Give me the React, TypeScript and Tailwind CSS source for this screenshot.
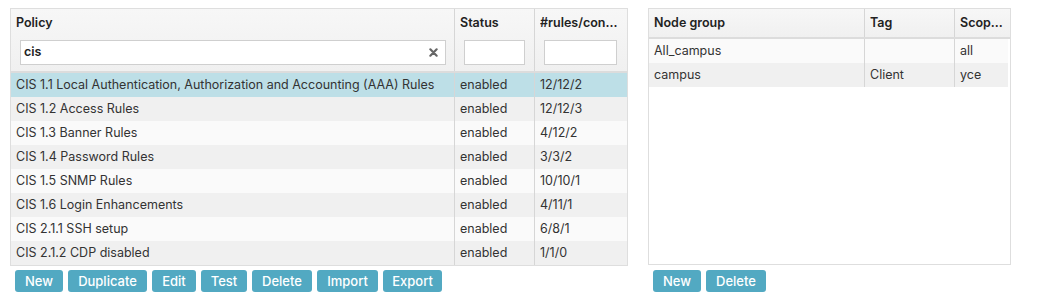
import React from 'react';

const policies = [
  { name: 'CIS 1.1 Local Authentication, Authorization and Accounting (AAA) Rules', status: 'enabled', rules: '12/12/2' },
  { name: 'CIS 1.2 Access Rules', status: 'enabled', rules: '12/12/3' },
  { name: 'CIS 1.3 Banner Rules', status: 'enabled', rules: '4/12/2' },
  { name: 'CIS 1.4 Password Rules', status: 'enabled', rules: '3/3/2' },
  { name: 'CIS 1.5 SNMP Rules', status: 'enabled', rules: '10/10/1' },
  { name: 'CIS 1.6 Login Enhancements', status: 'enabled', rules: '4/11/1' },
  { name: 'CIS 2.1.1 SSH setup', status: 'enabled', rules: '6/8/1' },
  { name: 'CIS 2.1.2 CDP disabled', status: 'enabled', rules: '1/1/0' },
];

const nodeGroups = [
  { name: 'All_campus', tag: '', scope: 'all' },
  { name: 'campus', tag: 'Client', scope: 'yce' },
];

const Btn: React.FC<{ label: string; w: string }> = ({ label, w }) => (
  <button className={`${w} h-[22px] rounded-[3px] bg-[#52a9c2] text-white text-[13px] font-medium leading-none`}>
    {label}
  </button>
);

const App: React.FC = () => {
  return (
    <div className="w-[1049px] h-[300px] bg-white text-[#333] text-[12.5px] font-['Inter',sans-serif] flex pt-2">
      {/* Policy grid */}
      <div className="ml-[10px] w-[618px] flex flex-col">
        <div className="h-[258px] border border-[#dedede] bg-[#fafafa] flex flex-col">
          {/* Header */}
          <div className="h-[64px] flex bg-gradient-to-b from-[#f7f7f7] to-[#f0f0f0] border-b-2 border-[#dcdcdc] font-semibold text-[#222]">
            <div className="w-[444px] border-r border-[#d6d6d6] flex flex-col px-[5px] pt-[6px]">
              <div className="h-[16px] leading-[16px]">Policy</div>
              <div className="mt-[9px] ml-[4px] w-[426px] h-[25px] bg-white border border-[#cfcfcf] flex items-center px-[3px]">
                <span className="flex-1 text-[#222]">cis</span>
                <svg width="9" height="9" viewBox="0 0 10 10" className="mr-[4px]">
                  <path d="M1.5 1.5 L8.5 8.5 M8.5 1.5 L1.5 8.5" stroke="#666" strokeWidth="2.4" strokeLinecap="round" />
                </svg>
              </div>
            </div>
            <div className="w-[80px] border-r border-[#d6d6d6] flex flex-col px-[5px] pt-[6px]">
              <div className="h-[16px] leading-[16px]">Status</div>
              <div className="mt-[9px] ml-[4px] w-[61px] h-[25px] bg-white border border-[#cfcfcf]" />
            </div>
            <div className="flex-1 flex flex-col px-[5px] pt-[6px] min-w-0">
              <div className="h-[16px] leading-[16px] truncate">#rules/con...</div>
              <div className="mt-[9px] ml-[4px] w-[73px] h-[25px] bg-white border border-[#cfcfcf]" />
            </div>
          </div>
          {/* Rows */}
          {policies.map((p, i) => (
            <div
              key={p.name}
              className={`h-[24px] flex leading-[24px] ${i === 0 ? 'bg-[#bddfe7]' : i % 2 === 1 ? 'bg-[#f0f0f0]' : 'bg-[#fafafa]'}`}
            >
              <div className="w-[444px] border-r border-[#d6d6d6] px-[5px] whitespace-nowrap overflow-hidden">{p.name}</div>
              <div className="w-[80px] border-r border-[#d6d6d6] px-[5px]">{p.status}</div>
              <div className="flex-1 px-[5px]">{p.rules}</div>
            </div>
          ))}
        </div>
        <div className="flex gap-[5px] mt-[4px] ml-[5px]">
          <Btn label="New" w="w-[48px]" />
          <Btn label="Duplicate" w="w-[79px]" />
          <Btn label="Edit" w="w-[44px]" />
          <Btn label="Test" w="w-[46px]" />
          <Btn label="Delete" w="w-[60px]" />
          <Btn label="Import" w="w-[61px]" />
          <Btn label="Export" w="w-[59px]" />
        </div>
      </div>

      {/* Node group grid */}
      <div className="ml-[20px] w-[363px] flex flex-col">
        <div className="h-[257px] border border-[#dedede] bg-white flex flex-col">
          <div className="h-[30px] flex bg-gradient-to-b from-[#f7f7f7] to-[#f0f0f0] border-b-2 border-[#dcdcdc] font-semibold text-[#222] leading-[28px]">
            <div className="w-[216px] border-r border-[#d6d6d6] px-[5px]">Node group</div>
            <div className="w-[90px] border-r border-[#d6d6d6] px-[5px]">Tag</div>
            <div className="flex-1 px-[5px] truncate">Scop...</div>
          </div>
          {nodeGroups.map((g, i) => (
            <div key={g.name} className={`h-[24px] flex leading-[24px] mr-[2px] ${i % 2 === 1 ? 'bg-[#f0f0f0]' : 'bg-[#fafafa]'}`}>
              <div className="w-[216px] border-r border-[#d6d6d6] px-[5px]">{g.name}</div>
              <div className="w-[90px] border-r border-[#d6d6d6] px-[5px]">{g.tag}</div>
              <div className="flex-1 px-[5px]">{g.scope}</div>
            </div>
          ))}
        </div>
        <div className="flex gap-[5px] mt-[5px] ml-[5px]">
          <Btn label="New" w="w-[48px]" />
          <Btn label="Delete" w="w-[60px]" />
        </div>
      </div>
    </div>
  );
};

export default App;
